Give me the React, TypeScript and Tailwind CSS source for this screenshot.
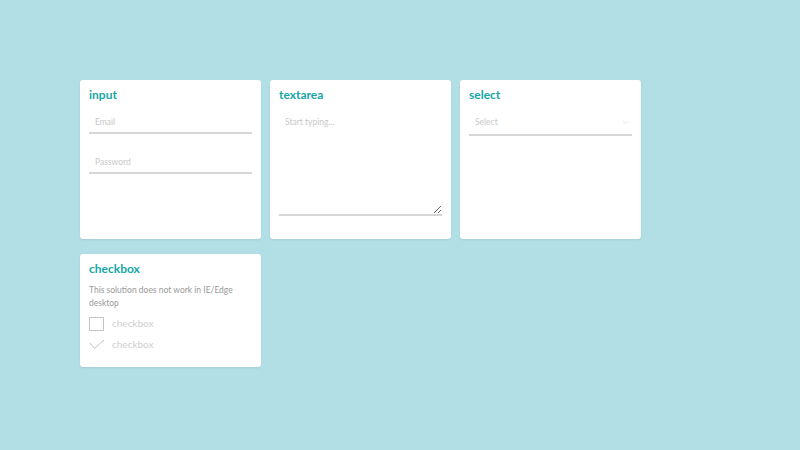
import { ChevronDown } from "lucide-react";

const font = { fontFamily: "Lato, 'Open Sans', sans-serif" };

function Card({ title, children, className = "" }: { title: string; children?: React.ReactNode; className?: string }) {
  return (
    <div className={"rounded-[3px] bg-white px-[9px] pt-[7px] shadow-[0_1px_2px_rgba(0,0,0,0.08)] " + className}>
      <h2 className="text-[12px] font-bold leading-[16px] text-[#16a6a6]">{title}</h2>
      {children}
    </div>
  );
}

function Field({ placeholder }: { placeholder: string }) {
  return (
    <input
      placeholder={placeholder}
      className="block h-[23px] w-full border-b-2 border-[#d6d6d6] bg-transparent px-[6px] text-[8.5px] outline-none placeholder:text-[#c8c8c8]"
    />
  );
}

export default function App() {
  return (
    <div className="min-h-[450px] w-full bg-[#b1dfe5] pl-[80px] pt-[80px]" style={font}>
      <div className="grid w-[561px] grid-cols-3 gap-x-[9px] gap-y-[15px]">
        <Card title="input" className="h-[159px]">
          <div className="mt-[8px] flex flex-col gap-[17px]">
            <Field placeholder="Email" />
            <Field placeholder="Password" />
          </div>
        </Card>

        <Card title="textarea" className="h-[159px]">
          <textarea
            placeholder="Start typing..."
            className="mt-[8px] block h-[105px] w-full resize-y border-b-2 border-[#d6d6d6] px-[6px] pt-[5px] text-[8.5px] outline-none placeholder:text-[#c8c8c8]"
          />
        </Card>

        <Card title="select" className="h-[159px]">
          <div className="mt-[8px] flex h-[25px] items-center justify-between border-b-2 border-[#d6d6d6] pl-[6px] pr-[2px]">
            <span className="text-[8.5px] text-[#c8c8c8]">Select</span>
            <ChevronDown size={9} strokeWidth={1.5} className="text-[#cfcfcf]" />
          </div>
        </Card>

        <Card title="checkbox" className="h-[113px]">
          <p className="mt-[7px] text-[8.5px] leading-[13px] text-[#9a9a9a]">
            This solution does not work in IE/Edge desktop
          </p>
          <label className="mt-[6px] flex items-center gap-[8px]">
            <span className="block h-[14px] w-[15px] border border-[#c4c4c4]" />
            <span className="text-[10px] text-[#cfcfcf]">checkbox</span>
          </label>
          <label className="mt-[6px] flex items-center gap-[7px]">
            <svg width="16" height="11" viewBox="0 0 16 11" className="shrink-0">
              <path d="M1 4 L5.5 9.5 L15 1" fill="none" stroke="#c4c4c4" strokeWidth="1" />
            </svg>
            <span className="text-[10px] text-[#cfcfcf]">checkbox</span>
          </label>
        </Card>
      </div>
    </div>
  );
}
